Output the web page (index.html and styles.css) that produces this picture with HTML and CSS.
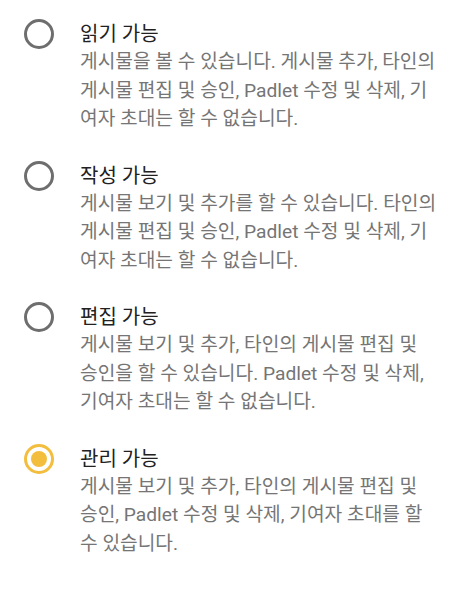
FILE: index.html
```html
<!DOCTYPE html>
<html lang="ko">
<head>
    <meta charset="UTF-8">
    <meta name="viewport" content="width=device-width, initial-scale=1.0">
    <title>권한</title>
    <link rel="stylesheet" href="styles.css">
</head>
<body>
    <div class="roles">
        <label class="role">
            <span class="radio"></span>
            <span class="role-text">
                <span class="role-name">읽기 가능</span>
                <span class="role-desc">게시물을 볼 수 있습니다. 게시물 추가, 타인의 게시물 편집 및 승인, Padlet 수정 및 삭제, 기여자 초대는 할 수 없습니다.</span>
            </span>
        </label>
        <label class="role">
            <span class="radio"></span>
            <span class="role-text">
                <span class="role-name">작성 가능</span>
                <span class="role-desc">게시물 보기 및 추가를 할 수 있습니다. 타인의 게시물 편집 및 승인, Padlet 수정 및 삭제, 기여자 초대는 할 수 없습니다.</span>
            </span>
        </label>
        <label class="role">
            <span class="radio"></span>
            <span class="role-text">
                <span class="role-name">편집 가능</span>
                <span class="role-desc">게시물 보기 및 추가, 타인의 게시물 편집 및 승인을 할 수 있습니다. Padlet 수정 및 삭제, 기여자 초대는 할 수 없습니다.</span>
            </span>
        </label>
        <label class="role">
            <span class="radio checked"></span>
            <span class="role-text">
                <span class="role-name">관리 가능</span>
                <span class="role-desc">게시물 보기 및 추가, 타인의 게시물 편집 및 승인, Padlet 수정 및 삭제, 기여자 초대를 할 수 있습니다.</span>
            </span>
        </label>
    </div>
</body>
</html>
```

FILE: styles.css
```css
body {
    margin: 0;
    background: #fff;
    font-family: Roboto, "Noto Sans CJK KR", sans-serif;
}
.roles {
    display: flex;
    flex-direction: column;
    gap: 28px;
    padding: 20px 0 0 24px;
}
.role {
    display: flex;
    gap: 26px;
}
.radio {
    flex: none;
    box-sizing: border-box;
    width: 30px;
    height: 30px;
    margin-top: -1px;
    border: 3px solid #6e6e6e;
    border-radius: 50%;
    display: flex;
    align-items: center;
    justify-content: center;
}
.radio.checked {
    border-color: #f3bd3e;
}
.radio.checked::after {
    content: "";
    width: 16px;
    height: 16px;
    border-radius: 50%;
    background: #f3bd3e;
}
.role-text {
    display: flex;
    flex-direction: column;
    width: 358px;
}
.role-name {
    font-size: 20px;
    line-height: 28px;
    color: #212121;
}
.role-desc {
    font-size: 19.2px;
    line-height: 28.5px;
    color: #757575;
}
```
